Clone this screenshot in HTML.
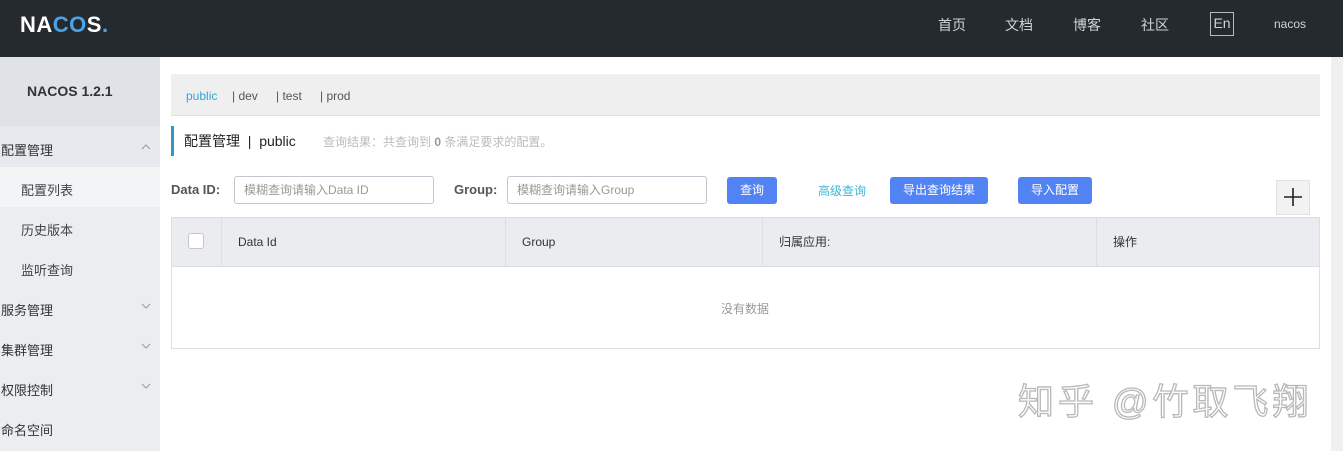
<!DOCTYPE html>
<html><head><meta charset="utf-8"><style>
*{margin:0;padding:0;box-sizing:border-box}
body{width:1343px;height:451px;overflow:hidden;background:#fff;font-family:"Liberation Sans","Noto Sans CJK SC",sans-serif;position:relative;color:#333}
.a{position:absolute;white-space:nowrap}
.hdr{left:0;top:0;width:1343px;height:57px;background:#252a2f}
.nav{color:#d0d3d6;font-size:14px;top:15px}
.side{left:0;top:57px;width:160px;height:394px;background:#ebedf1}
.sitem{font-size:13px;color:#333;left:1px}
.sub{font-size:13px;color:#444;left:21px}
.chev{left:141px;width:10px;height:10px}
.btn{background:#5183f5;color:#fff;font-size:12px;height:27px;line-height:27px;text-align:center;border-radius:3px;top:177px}
.inp{height:28px;border:1px solid #c4c6cf;border-radius:3px;top:176px;font-size:12px;color:#999;line-height:26px;padding-left:9px;background:#fff}
.th{top:218px;height:48px;background:#ebecf0;border-right:1px solid #dcdee3;font-size:12px;color:#333;line-height:48px;padding-left:16px}
</style></head><body>
<div class="a hdr"></div>
<div class="a" style="left:20px;top:12px;font-size:22px;font-weight:bold;color:#fff;letter-spacing:0.5px">NA<span style="color:#4aa3e8">CO</span>S<span style="color:#4aa3e8">.</span></div>
<div class="a nav" style="left:938px">首页</div>
<div class="a nav" style="left:1005px">文档</div>
<div class="a nav" style="left:1073px">博客</div>
<div class="a nav" style="left:1141px">社区</div>
<div class="a" style="left:1210px;top:12px;width:24px;height:24px;border:1px solid #bbb;color:#d0d3d6;font-size:14px;text-align:center;line-height:21px">En</div>
<div class="a" style="left:1274px;top:17px;font-size:12px;color:#d0d3d6">nacos</div>

<div class="a side"></div>
<div class="a" style="left:0;top:57px;width:160px;height:69px;background:#dfe2e7"></div>
<div class="a" style="left:0;top:126px;width:160px;height:41px;background:#e6e9ed"></div>
<div class="a" style="left:0;top:167px;width:160px;height:40px;background:#f3f4f6"></div>
<div class="a" style="left:27px;top:83px;font-size:14px;font-weight:bold;color:#333">NACOS 1.2.1</div>
<div class="a sitem" style="top:140px">配置管理</div>
<svg class="a chev" style="top:142px" viewBox="0 0 10 10"><path d="M1 7L5 3L9 7" fill="none" stroke="#999" stroke-width="1"/></svg>
<div class="a sub" style="top:180px">配置列表</div>
<div class="a sub" style="top:220px">历史版本</div>
<div class="a sub" style="top:260px">监听查询</div>
<div class="a sitem" style="top:300px">服务管理</div>
<svg class="a chev" style="top:301px" viewBox="0 0 10 10"><path d="M1 3L5 7L9 3" fill="none" stroke="#999" stroke-width="1"/></svg>
<div class="a sitem" style="top:340px">集群管理</div>
<svg class="a chev" style="top:341px" viewBox="0 0 10 10"><path d="M1 3L5 7L9 3" fill="none" stroke="#999" stroke-width="1"/></svg>
<div class="a sitem" style="top:380px">权限控制</div>
<svg class="a chev" style="top:381px" viewBox="0 0 10 10"><path d="M1 3L5 7L9 3" fill="none" stroke="#999" stroke-width="1"/></svg>
<div class="a sitem" style="top:420px">命名空间</div>

<div class="a" style="left:171px;top:74px;width:1149px;height:42px;background:#efefef;border-bottom:1px solid #ddd"></div>
<div class="a" style="left:186px;top:89px;font-size:12px;color:#33a6d4">public</div>
<div class="a" style="left:232px;top:89px;font-size:12px;color:#555">| dev</div>
<div class="a" style="left:276px;top:89px;font-size:12px;color:#555">| test</div>
<div class="a" style="left:320px;top:89px;font-size:12px;color:#555">| prod</div>

<div class="a" style="left:171px;top:126px;width:3px;height:30px;background:#2c9ac5"></div>
<div class="a" style="left:184px;top:131px;font-size:14px;color:#222">配置管理 &nbsp;|&nbsp; public</div>
<div class="a" style="left:323px;top:133px;font-size:12px;color:#bbb">查询结果：共查询到 <b style="color:#999">0</b> 条满足要求的配置。</div>

<div class="a" style="left:171px;top:182px;font-size:13px;font-weight:bold;color:#555">Data ID:</div>
<div class="a inp" style="left:234px;width:200px">模糊查询请输入Data ID</div>
<div class="a" style="left:454px;top:182px;font-size:13px;font-weight:bold;color:#555">Group:</div>
<div class="a inp" style="left:507px;width:200px">模糊查询请输入Group</div>
<div class="a btn" style="left:727px;width:50px">查询</div>
<div class="a" style="left:818px;top:182px;font-size:12px;color:#3db6d8">高级查询</div>
<div class="a btn" style="left:890px;width:98px">导出查询结果</div>
<div class="a btn" style="left:1018px;width:74px">导入配置</div>
<div class="a" style="left:1276px;top:180px;width:34px;height:35px;background:#f2f2f2;border:1px solid #e0e0e0"></div>
<svg class="a" style="left:1283px;top:187px" width="20" height="20" viewBox="0 0 20 20"><path d="M10 1V19M1 10H19" stroke="#222" stroke-width="1.6"/></svg>

<div class="a" style="left:171px;top:217px;width:1149px;height:132px;border:1px solid #dcdee3"></div>
<div class="a th" style="left:172px;width:50px"></div>
<div class="a" style="left:188px;top:233px;width:16px;height:16px;border:1px solid #c4c6cf;border-radius:3px;background:#fff"></div>
<div class="a th" style="left:222px;width:284px">Data Id</div>
<div class="a th" style="left:506px;width:257px">Group</div>
<div class="a th" style="left:763px;width:334px">归属应用:</div>
<div class="a th" style="left:1097px;width:222px;border-right:none">操作</div>
<div class="a" style="left:172px;top:266px;width:1147px;height:1px;background:#dcdee3"></div>
<div class="a" style="left:721px;top:300px;font-size:12px;color:#999">没有数据</div>

<div class="a" style="left:1018px;top:373px;font-size:36px;color:#fff;-webkit-text-stroke:1.3px #b8b8b8;letter-spacing:4px">知乎 @竹取飞翔</div>
<div class="a" style="left:1331px;top:57px;width:12px;height:394px;background:#f0f0f0"></div>
</body></html>
